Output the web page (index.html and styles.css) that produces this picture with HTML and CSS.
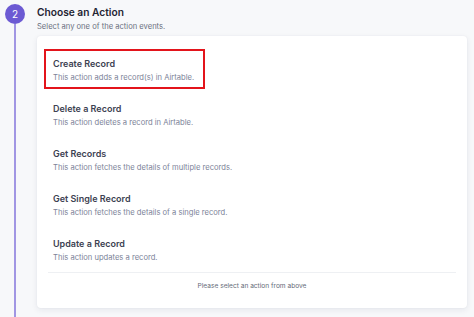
FILE: index.html
```html
<!DOCTYPE html>
<html>
<head>
<meta charset="utf-8">
<link rel="stylesheet" href="styles.css">
</head>
<body>
<div class="step">
  <div class="rail">
    <div class="num">2</div>
    <div class="line"></div>
  </div>
  <div class="content">
    <div class="title">Choose an Action</div>
    <div class="sub">Select any one of the action events.</div>
    <div class="card">
      <div class="list">
        <div class="item selected">
          <div class="it">Create Record</div>
          <div class="id">This action adds a record(s) in Airtable.</div>
        </div>
        <div class="item">
          <div class="it">Delete a Record</div>
          <div class="id">This action deletes a record in Airtable.</div>
        </div>
        <div class="item">
          <div class="it">Get Records</div>
          <div class="id">This action fetches the details of multiple records.</div>
        </div>
        <div class="item">
          <div class="it">Get Single Record</div>
          <div class="id">This action fetches the details of a single record.</div>
        </div>
        <div class="item">
          <div class="it">Update a Record</div>
          <div class="id">This action updates a record.</div>
        </div>
      </div>
      <div class="foot">Please select an action from above</div>
    </div>
  </div>
</div>
</body>
</html>
```
FILE: styles.css
```css
html, body {
  margin: 0;
  padding: 0;
  background: #f7f8fa;
  font-family: Inter, "Liberation Sans", sans-serif;
  width: 474px;
  height: 317px;
  overflow: hidden;
}
.step {
  display: flex;
  height: 317px;
}
.rail {
  width: 30px;
  display: flex;
  flex-direction: column;
  align-items: center;
  padding-top: 4px;
}
.num {
  width: 20px;
  height: 20px;
  border-radius: 50%;
  background: #6c5ad3;
  color: #fff;
  font-size: 10px;
  display: flex;
  align-items: center;
  justify-content: center;
  flex: none;
}
.line {
  width: 2px;
  flex: 1;
  background: #a196e3;
}
.content {
  margin-left: 7px;
  width: 430px;
  display: flex;
  flex-direction: column;
}
.title {
  margin-top: 5px;
  font-size: 10.2px;
  font-weight: 600;
  color: #1f2433;
  line-height: 14px;
}
.sub {
  margin-top: 2px;
  font-size: 7.6px;
  color: #6b7080;
  line-height: 11px;
}
.card {
  margin-top: 4px;
  background: #fff;
  border-radius: 4px;
  box-shadow: 0 2px 6px rgba(30, 40, 80, 0.08), 0 0 2px rgba(30, 40, 80, 0.06);
  height: 272px;
  padding: 13px 11px 0 7px;
  box-sizing: border-box;
}
.list {
  display: flex;
  flex-direction: column;
  align-items: flex-start;
  gap: 5px;
}
.item {
  border: 2px solid transparent;
  padding: 6px 9px 5px 7px;
  height: 40px;
  box-sizing: border-box;
}
.item.selected {
  border-color: #e3141b;
}
.it {
  font-size: 9px;
  font-weight: 600;
  color: #3d4252;
  line-height: 13px;
}
.id {
  margin-top: 2px;
  font-size: 7.6px;
  color: #7c8398;
  line-height: 11px;
  white-space: nowrap;
}
.foot {
  margin: 3px 0 0 4px;
  border-top: 1px solid #eef0f3;
  padding-top: 9px;
  text-align: center;
  font-size: 6.6px;
  color: #666b78;
}
```
